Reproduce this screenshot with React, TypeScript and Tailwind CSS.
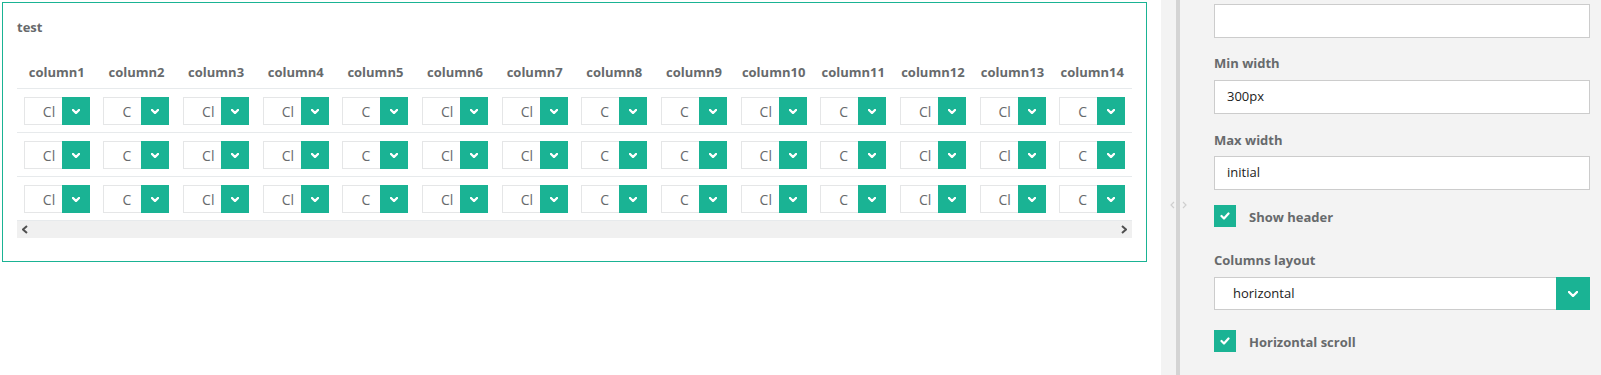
import React from 'react'

const teal = 'bg-[#1ab394]'

const columns = Array.from({ length: 14 }, (_, i) => `column${i + 1}`)
// which cells show only "C" (text clipped in the reference)
const shortCells = [1, 4, 7, 8, 10, 13]

function Chevron({ w = 8, h = 5, className = '' }: { w?: number; h?: number; className?: string }) {
  return (
    <svg width={w} height={h} viewBox={`0 0 ${w} ${h}`} className={className}>
      <polyline
        points={`1,1 ${w / 2},${h - 1} ${w - 1},1`}
        fill="none"
        stroke="white"
        strokeWidth={2.4}
        strokeLinecap="round"
        strokeLinejoin="round"
      />
    </svg>
  )
}

function Check() {
  return (
    <svg width="10" height="8" viewBox="0 0 10 8">
      <polyline
        points="1.5,4 4,6.5 8.5,1.5"
        fill="none"
        stroke="white"
        strokeWidth={2.2}
        strokeLinecap="round"
        strokeLinejoin="round"
      />
    </svg>
  )
}

function Arrow({ dir, color = '#505050', w = 6, h = 9, sw = 2 }: { dir: 'left' | 'right'; color?: string; w?: number; h?: number; sw?: number }) {
  const pts = dir === 'left' ? `${w - 1},1 1,${h / 2} ${w - 1},${h - 1}` : `1,1 ${w - 1},${h / 2} 1,${h - 1}`
  return (
    <svg width={w} height={h} viewBox={`0 0 ${w} ${h}`}>
      <polyline points={pts} fill="none" stroke={color} strokeWidth={sw} strokeLinejoin="miter" />
    </svg>
  )
}

function CellSelect({ text }: { text: string }) {
  return (
    <div className="mx-auto flex h-[28px] w-[66px]">
      <div className="flex flex-1 items-center overflow-hidden border border-r-0 border-[#e5e6e7] bg-white pl-[18px] text-[14px] text-[#676a6c]">
        {text}
      </div>
      <div className={`flex w-[28px] items-center justify-center ${teal}`}>
        <Chevron w={8} h={5} />
      </div>
    </div>
  )
}

function Label({ children, className = '' }: { children: React.ReactNode; className?: string }) {
  return <div className={`text-[13px] leading-[19px] font-bold text-[#676a6c] ${className}`}>{children}</div>
}

function Input({ value, className = '' }: { value?: string; className?: string }) {
  return (
    <div className={`flex h-[34px] items-center border border-[#cccccc] bg-white px-[12px] text-[13px] text-[#222] ${className}`}>
      {value}
    </div>
  )
}

function Checkbox({ label, className = '' }: { label: string; className?: string }) {
  return (
    <div className={`flex h-[22px] items-center ${className}`}>
      <div className={`flex h-[22px] w-[22px] items-center justify-center ${teal}`}>
        <Check />
      </div>
      <span className="ml-[13px] pt-[3px] text-[13px] font-bold text-[#676a6c]">{label}</span>
    </div>
  )
}

export default function App() {
  return (
    <div className="flex h-[375px] w-[1601px] overflow-hidden bg-white font-['Open_Sans',sans-serif]">
      {/* canvas */}
      <div className="w-[1161px] pt-[2px] pl-[2px]">
        <div className="h-[260px] w-[1145px] border border-[#1ab394] px-[14px] pt-[15px]">
          <div className="text-[13px] leading-[19px] font-bold text-[#676a6c]">test</div>
          <div className="mt-[19px] w-[1115px]">
            <div className="grid h-[33px] grid-cols-[repeat(14,minmax(0,1fr))] items-end border-b border-[#e7eaec] pb-[6px]">
              {columns.map((c) => (
                <div key={c} className="text-center text-[13px] leading-[19px] font-bold text-[#676a6c]">
                  {c}
                </div>
              ))}
            </div>
            {[0, 1, 2].map((r) => (
              <div
                key={r}
                className="grid h-[44px] grid-cols-[repeat(14,minmax(0,1fr))] border-b border-[#e7eaec] pt-[8px]"
              >
                {columns.map((c, i) => (
                  <CellSelect key={c} text={shortCells.includes(i) ? 'C' : 'Cl'} />
                ))}
              </div>
            ))}
            <div className="flex h-[17px] items-center justify-between bg-[#f0f0f0] px-[5px]">
              <Arrow dir="left" />
              <Arrow dir="right" />
            </div>
          </div>
        </div>
      </div>

      {/* splitter */}
      <div className="relative flex w-[19px]">
        <div className="w-[15px] bg-[#f3f3f3]" />
        <div className="w-[4px] bg-[#d4d4d4]" />
        <div className="absolute top-[201px] left-[9px] flex gap-[7px]">
          <Arrow dir="left" color="#cfcfcf" w={5} h={8} sw={1.2} />
          <Arrow dir="right" color="#cfcfcf" w={5} h={8} sw={1.2} />
        </div>
      </div>

      {/* properties panel */}
      <div className="flex-1 bg-[#f3f3f3] pt-[4px] pr-[11px] pl-[34px]">
        <Input />
        <Label className="mt-[16px] mb-[7px]">Min width</Label>
        <Input value="300px" />
        <Label className="mt-[17px] mb-[6px]">Max width</Label>
        <Input value="initial" />
        <Checkbox label="Show header" className="mt-[15px]" />
        <Label className="mt-[24px] mb-[7px]">Columns layout</Label>
        <div className="flex h-[33px]">
          <div className="flex flex-1 items-center border border-r-0 border-[#cccccc] bg-white pl-[18px] text-[13px] text-[#222]">
            horizontal
          </div>
          <div className={`flex w-[34px] items-center justify-center ${teal}`}>
            <Chevron w={10} h={6} />
          </div>
        </div>
        <Checkbox label="Horizontal scroll" className="mt-[20px]" />
      </div>
    </div>
  )
}
